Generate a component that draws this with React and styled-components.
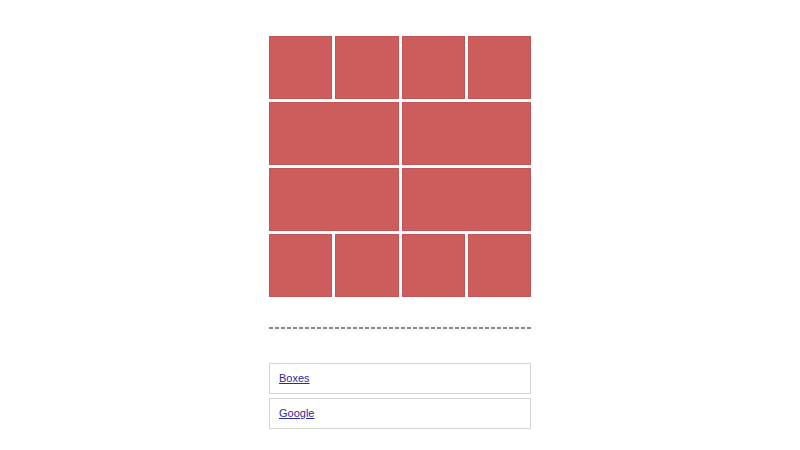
import React from 'react'
import styled, { createGlobalStyle } from 'styled-components'

const GlobalStyle = createGlobalStyle`
  body {
    margin: 0;
    background: #fff;
    font-family: "Liberation Sans", Arial, sans-serif;
  }
`

const Page = styled.div`
  width: 262px;
  margin: 36px auto 0;
`

const Grid = styled.div`
  display: grid;
  grid-template-columns: repeat(4, 1fr);
  grid-auto-rows: 63px;
  gap: 3px;
`

const Box = styled.div`
  background: #cd5c5c;
  box-shadow: inset 0 0 0 1px #c25555;
  grid-column: span ${(p) => p.span || 1};
`

const Divider = styled.div`
  height: 2px;
  margin: 30px 0 34px;
  background: repeating-linear-gradient(
    to right,
    #858585 0 4px,
    transparent 4px 6px
  );
`

const LinkList = styled.ul`
  list-style: none;
  margin: 0;
  padding: 0;
  display: flex;
  flex-direction: column;
  gap: 4px;
`

const LinkItem = styled.li`
  border: 1px solid #d4d4d4;
  height: 29px;
  display: flex;
  align-items: center;
  padding: 0 9px;
  font-size: 11px;
  line-height: 1;

  a {
    color: #2a2a9c;
  }
`

const rows = [
  [1, 1, 1, 1],
  [2, 2],
  [2, 2],
  [1, 1, 1, 1],
]

export default function App() {
  return (
    <>
      <GlobalStyle />
      <Page>
        <Grid>
          {rows.flatMap((row, i) =>
            row.map((span, j) => <Box key={`${i}-${j}`} span={span} />)
          )}
        </Grid>
        <Divider />
        <LinkList>
          <LinkItem>
            <a href="#boxes">Boxes</a>
          </LinkItem>
          <LinkItem>
            <a href="#google">Google</a>
          </LinkItem>
        </LinkList>
      </Page>
    </>
  )
}
